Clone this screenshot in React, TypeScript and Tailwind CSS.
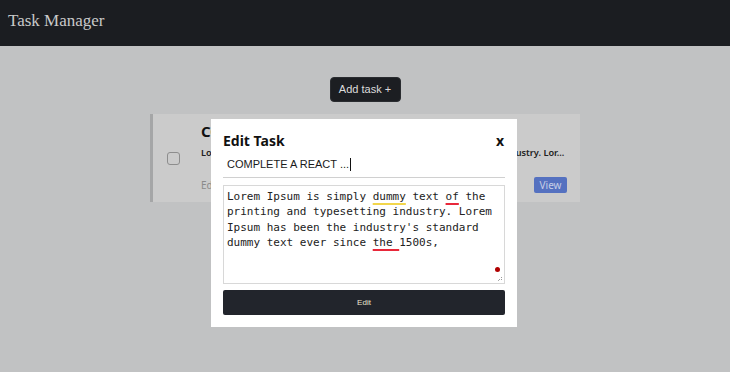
import React from "react";

export default function App() {
  return (
    <div className="relative min-h-screen w-full bg-[#c1c2c3]">
      <header className="flex h-[46px] items-center bg-[#1b1d21] px-2 pb-[4px]">
        <span className="text-[17px] text-[#c9c9c9]" style={{ fontFamily: '"Liberation Serif", serif' }}>
          Task Manager
        </span>
      </header>

      <main className="flex flex-col items-center pt-[31px]" style={{ fontFamily: '"Noto Sans", sans-serif' }}>
        <button
          className="h-[25px] w-[71px] rounded-[4px] border border-[#2a2c30] bg-[#1c1e22] text-[11px] text-[#dcdcdc]"
          style={{ fontFamily: '"Liberation Sans", sans-serif' }}
        >
          Add task +
        </button>

        <div className="mt-[12px] flex h-[88px] w-[430px] items-center border-l-[3px] border-[#a5a6a7] bg-[#cbcbcb] pr-[13px]">
          <div className="ml-[14px] h-[13px] w-[13px] shrink-0 rounded-[3px] border border-[#8d8d8d]" />
          <div className="ml-[21px] flex h-full min-w-0 flex-1 flex-col pt-[7px]">
            <div className="text-[15px] font-bold leading-[20px] text-[#111]">COMPLETE A REACT ...</div>
            <div className="mt-[6px] truncate text-[9.2px] font-semibold leading-[12px] text-[#222]">
              Lorem Ipsum is simply dummy text of the printing and typesetting industry. Lor...
            </div>
            <div className="mt-[18px] flex items-center justify-between">
              <span className="text-[10px] text-[#8a8a8a]">Edit</span>
              <button className="h-[16px] w-[33px] rounded-[2px] bg-[#5571c0] text-[10px] leading-[16px] text-[#c6cee6]">
                View
              </button>
            </div>
          </div>
        </div>
      </main>

      <div className="absolute inset-0 flex items-start justify-center pt-[119px]">
        <div className="mr-[2px] w-[306px] bg-white px-[12px] pb-[12px] pt-[12px]" style={{ fontFamily: '"Noto Sans", sans-serif' }}>
          <div className="flex items-center justify-between">
            <span className="text-[14px] font-bold leading-[19px] text-[#111]">Edit Task</span>
            <span className="mr-[1px] text-[14px] font-bold leading-[19px] text-[#111]">x</span>
          </div>
          <div
            className="flex h-[28px] items-center border-b border-[#d0d0d0] pl-[4px] pt-[1px] text-[11px] text-[#1a1a1a]"
            style={{ fontFamily: '"Liberation Sans", sans-serif' }}
          >
            <span>COMPLETE A REACT ...</span>
            <span className="ml-[1px] h-[13px] w-[1px] bg-[#111]" />
          </div>
          <div className="relative mt-[7px] h-[99px] border border-[#d8d8d8] px-[3px] pt-[3px]">
            <div
              className="text-[11px] leading-[15.33px] text-[#222]"
              style={{ fontFamily: '"DejaVu Sans Mono", monospace' }}
            >
              Lorem Ipsum is simply{" "}
              <span className="underline decoration-[#f2d64b] decoration-2 underline-offset-[3px]">dummy</span> text{" "}
              <span className="underline decoration-[#e8283a] decoration-2 underline-offset-[3px]">of</span> the printing
              and typesetting industry. Lorem Ipsum has been the industry's standard dummy text ever since{" "}
              <span className="underline decoration-[#e8283a] decoration-2 underline-offset-[3px]">the&nbsp;</span>1500s,
            </div>
            <span className="absolute bottom-[11px] right-[4px] h-[5px] w-[5px] rounded-full bg-[#b00000]" />
            <svg className="absolute bottom-[1px] right-[1px]" width="5" height="5" viewBox="0 0 5 5">
              <rect x="3" y="0" width="1" height="1" fill="#999" />
              <rect x="1" y="2" width="1" height="1" fill="#999" />
              <rect x="3" y="2" width="1" height="1" fill="#999" />
              <rect x="0" y="3" width="1" height="1" fill="#aaa" />
            </svg>
          </div>
          <button
            className="mt-[6px] flex h-[25px] w-full items-center justify-center rounded-[2px] bg-[#22252c] text-[8px] text-[#ece6cf]"
            style={{ fontFamily: '"Liberation Sans", sans-serif' }}
          >
            Edit
          </button>
        </div>
      </div>
    </div>
  );
}
